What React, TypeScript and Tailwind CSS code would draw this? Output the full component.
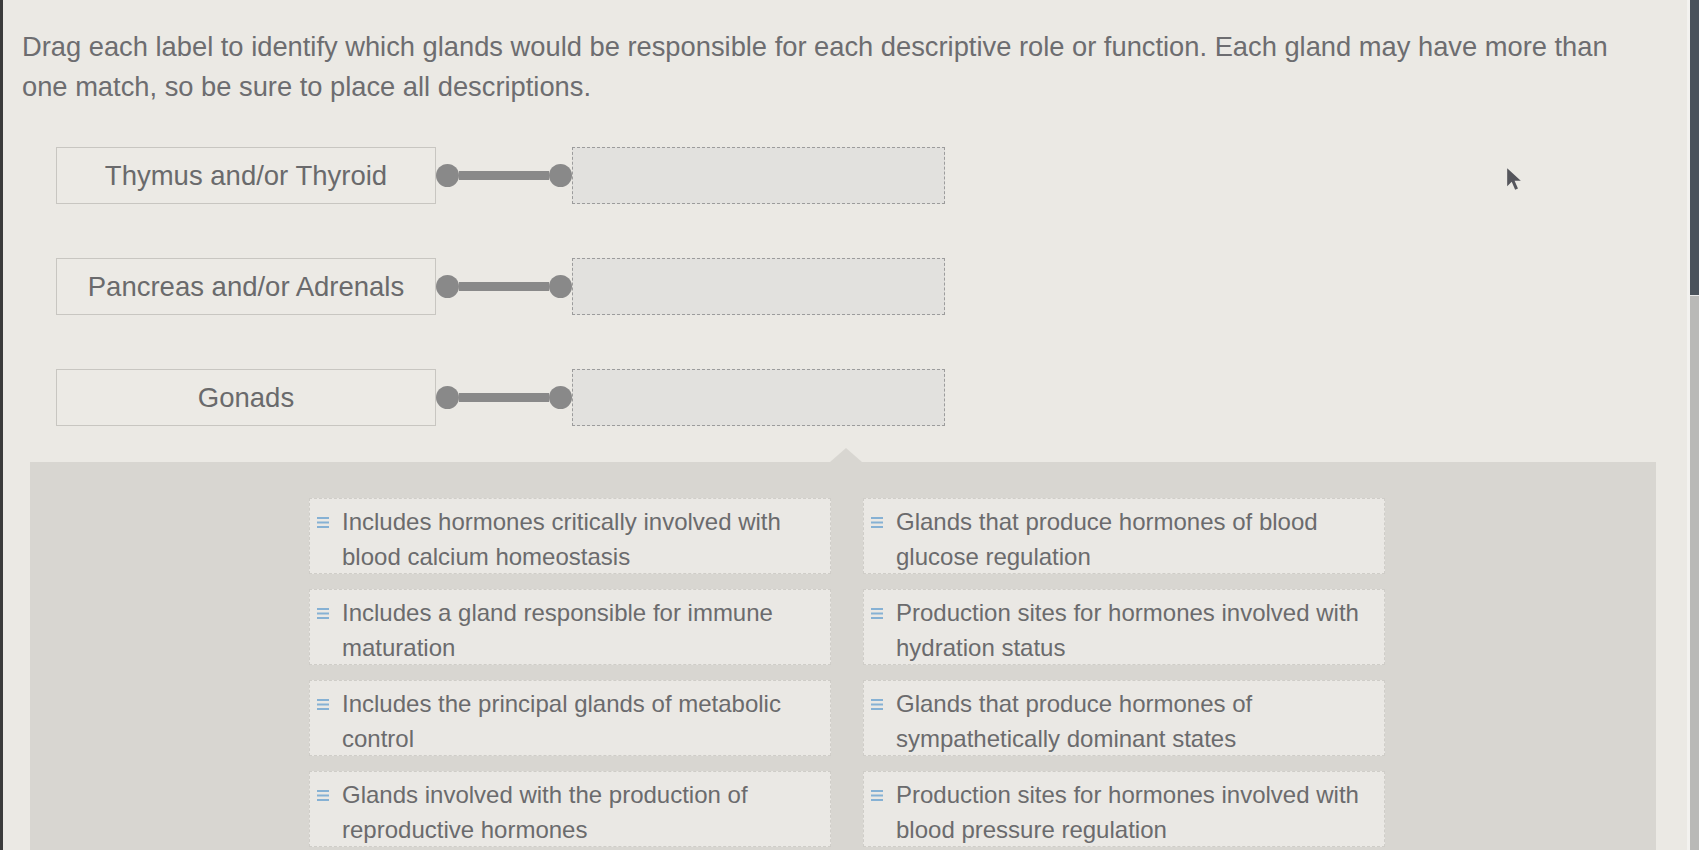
import React from "react";

const glands = ["Thymus and/or Thyroid", "Pancreas and/or Adrenals", "Gonads"];

const descriptions = [
  ["Includes hormones critically involved with", "blood calcium homeostasis"],
  ["Glands that produce hormones of blood", "glucose regulation"],
  ["Includes a gland responsible for immune", "maturation"],
  ["Production sites for hormones involved with", "hydration status"],
  ["Includes the principal glands of metabolic", "control"],
  ["Glands that produce hormones of", "sympathetically dominant states"],
  ["Glands involved with the production of", "reproductive hormones"],
  ["Production sites for hormones involved with", "blood pressure regulation"],
];

const GripIcon = () => (
  <svg width="12" height="13" viewBox="0 0 12 13" className="shrink-0 mt-[12px]">
    <rect x="0" y="1" width="12" height="2" fill="#86b1d4" />
    <rect x="0" y="5.5" width="12" height="2" fill="#86b1d4" />
    <rect x="0" y="10" width="12" height="2" fill="#86b1d4" />
  </svg>
);

const LabelRow = ({ name }: { name: string }) => (
  <div className="flex items-center h-[57px]">
    <div className="w-[380px] h-full border border-[#c8c6c1] bg-[#eceae5] flex items-center justify-center text-[27.5px] text-[#6a6a6c]">
      {name}
    </div>
    <div className="flex items-center">
      <div className="w-[23px] h-[23px] rounded-full bg-[#898989]" />
      <div className="w-[90px] h-[9px] bg-[#898989]" />
      <div className="w-[23px] h-[23px] rounded-full bg-[#898989]" />
    </div>
    <div className="w-[373px] h-full bg-[#e2e1de] border border-dashed border-[#9c9c9c]" />
  </div>
);

const Card = ({ lines }: { lines: string[] }) => (
  <div className="h-[76px] bg-[#eae8e4] border border-dashed border-[#cfcdc8] pl-[7px] pt-[5px] flex gap-[13px]">
    <GripIcon />
    <div className="text-[24px] leading-[35px] text-[#6b6b6d]">
      <div>{lines[0]}</div>
      <div>{lines[1]}</div>
    </div>
  </div>
);

export default function App() {
  return (
    <div className="w-[1699px] h-[850px] overflow-hidden flex bg-[#ebe9e4] font-['Liberation_Sans',Arial,sans-serif]">
      <div className="relative flex-1 flex flex-col border-l-[3px] border-[#3b3b3b]">
        <p className="pl-[19px] max-w-[1619px] pt-[27px] text-[27.3px] leading-[40px] text-[#6d6d70]">
          Drag each label to identify which glands would be responsible for each descriptive role or function. Each gland may have more than one match, so be sure to place all descriptions.
        </p>

        <div className="mt-[40px] pl-[53px] flex flex-col gap-[54px]">
          {glands.map((g) => (
            <LabelRow key={g} name={g} />
          ))}
        </div>

        <div className="relative mt-[36px] ml-[27px] w-[1626px] flex-1 bg-[#d8d6d1] pt-[36px] pl-[279px]">
          <div className="absolute top-[-14px] left-[800px] w-0 h-0 border-l-[16px] border-r-[16px] border-b-[14px] border-l-transparent border-r-transparent border-b-[#d8d6d1]" />
          <div className="grid grid-cols-[522px_522px] gap-x-[32px] gap-y-[15px]">
            {descriptions.map((d) => (
              <Card key={d.join(" ")} lines={d} />
            ))}
          </div>
        </div>

        {/* mouse pointer */}
        <svg width="16" height="25" viewBox="0 0 14 22" className="absolute left-[1503px] top-[167px]">
          <path d="M1 1 L1 17 L5 13 L8 20 L10.5 19 L7.5 12 L13 12 Z" fill="#55565c" />
        </svg>
      </div>

      <div className="w-[12px] border-l-[3px] border-[#f3f2ef] flex flex-col">
        <div className="h-[295px] bg-[#4a525b]" />
        <div className="flex-1 bg-[#b9b9b7] border-t border-[#e8e8e8]" />
      </div>
    </div>
  );
}
